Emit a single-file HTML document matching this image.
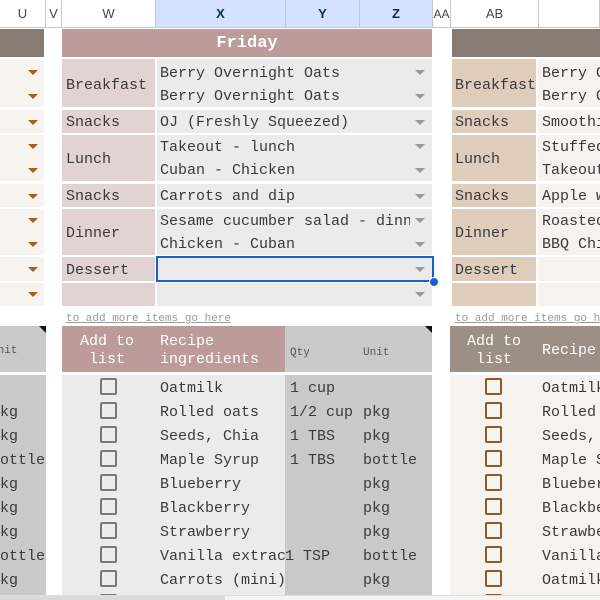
<!DOCTYPE html>
<html><head><meta charset="utf-8">
<style>
*{margin:0;padding:0;box-sizing:border-box}
html,body{width:600px;height:600px;overflow:hidden}
body{background:#fff;font-family:"Liberation Mono",monospace;font-size:15px;color:#3a3a3a}
#w{position:relative;width:600px;height:600px;overflow:hidden}
.a{position:absolute}
.t{position:absolute;white-space:nowrap;overflow:hidden;line-height:22px;margin-top:2px}
.hd{position:absolute;top:0;height:28px;border-right:1px solid #c7c7c7;border-bottom:1px solid #c7c7c7;font-family:"Liberation Sans",sans-serif;font-size:13px;color:#444;text-align:center;line-height:28px}
.sel{background:#d3e3fd;color:#0b2a66;font-weight:bold}
.arr{position:absolute;width:0;height:0;border-left:5px solid transparent;border-right:5px solid transparent;border-top:5px solid #999}
.br{border-top-color:#a0622d}
.cb{position:absolute;width:17px;height:17px;border:2px solid #777;border-radius:2px}
.cbb{border-color:#8b5a2b}
.lnk{position:absolute;font-size:11px;color:#999;text-decoration:underline;white-space:nowrap;margin-top:1px}
</style></head><body><div id="w">
<div class="hd" style="left:0;width:46px;background:#fff">U</div>
<div class="hd" style="left:46px;width:16px">V</div>
<div class="hd" style="left:62px;width:94px">W</div>
<div class="hd sel" style="left:156px;width:130px">X</div>
<div class="hd sel" style="left:286px;width:74px">Y</div>
<div class="hd sel" style="left:360px;width:73px">Z</div>
<div class="hd" style="left:433px;width:18px;font-size:12px">AA</div>
<div class="hd" style="left:451px;width:88px">AB</div>
<div class="hd" style="left:539px;width:61px"></div>

<div class="a" style="left:0;top:29px;width:44px;height:28px;background:#877c74"></div>
<div class="a" style="left:0;top:59px;width:44px;height:48px;background:#f7f3ee"></div>
<div class="a" style="left:0;top:110px;width:44px;height:23px;background:#f7f3ee"></div>
<div class="a" style="left:0;top:135px;width:44px;height:46px;background:#f7f3ee"></div>
<div class="a" style="left:0;top:184px;width:44px;height:23px;background:#f7f3ee"></div>
<div class="a" style="left:0;top:209px;width:44px;height:46px;background:#f7f3ee"></div>
<div class="a" style="left:0;top:257px;width:44px;height:24px;background:#f7f3ee"></div>
<div class="a" style="left:0;top:283px;width:44px;height:23px;background:#f7f3ee"></div>
<div class="arr br" style="left:28px;top:70px"></div>
<div class="arr br" style="left:28px;top:94px"></div>
<div class="arr br" style="left:28px;top:120px"></div>
<div class="arr br" style="left:28px;top:144px"></div>
<div class="arr br" style="left:28px;top:168px"></div>
<div class="arr br" style="left:28px;top:194px"></div>
<div class="arr br" style="left:28px;top:218px"></div>
<div class="arr br" style="left:28px;top:242px"></div>
<div class="arr br" style="left:28px;top:267px"></div>
<div class="arr br" style="left:28px;top:292px"></div>
<div class="a" style="left:0;top:326px;width:46px;height:46px;background:#c9c9c9;overflow:hidden"><div class="t" style="left:-9px;top:12px;font-size:11px;color:#555">Unit</div></div>
<div class="a" style="left:39px;top:326px;width:0;height:0;border-left:7px solid transparent;border-top:7px solid #111"></div>
<div class="a" style="left:0;top:375px;width:46px;height:220px;background:#c9c9c9;overflow:hidden">
<div class="t" style="left:-9px;top:25px">pkg</div>
<div class="t" style="left:-9px;top:49px">pkg</div>
<div class="t" style="left:-9px;top:73px">bottle</div>
<div class="t" style="left:-9px;top:97px">pkg</div>
<div class="t" style="left:-9px;top:121px">pkg</div>
<div class="t" style="left:-9px;top:145px">pkg</div>
<div class="t" style="left:-9px;top:169px">bottle</div>
<div class="t" style="left:-9px;top:193px">pkg</div>
</div>

<div class="a" style="left:62px;top:29px;width:370px;height:28px;background:#bc9b9a;color:#fff;font-weight:bold;font-size:17px;text-align:center;line-height:30px;font-family:'Liberation Mono',monospace">Friday</div>
<div class="a" style="left:62px;top:59px;width:93px;height:48px;background:#e0d3d2"></div>
<div class="a" style="left:62px;top:110px;width:93px;height:23px;background:#e0d3d2"></div>
<div class="a" style="left:62px;top:135px;width:93px;height:46px;background:#e0d3d2"></div>
<div class="a" style="left:62px;top:184px;width:93px;height:23px;background:#e0d3d2"></div>
<div class="a" style="left:62px;top:209px;width:93px;height:46px;background:#e0d3d2"></div>
<div class="a" style="left:62px;top:257px;width:93px;height:24px;background:#e0d3d2"></div>
<div class="a" style="left:62px;top:283px;width:93px;height:23px;background:#e0d3d2"></div>
<div class="a" style="left:157px;top:59px;width:275px;height:48px;background:#ebebeb"></div>
<div class="a" style="left:157px;top:110px;width:275px;height:23px;background:#ebebeb"></div>
<div class="a" style="left:157px;top:135px;width:275px;height:46px;background:#ebebeb"></div>
<div class="a" style="left:157px;top:184px;width:275px;height:23px;background:#ebebeb"></div>
<div class="a" style="left:157px;top:209px;width:275px;height:46px;background:#ebebeb"></div>
<div class="a" style="left:157px;top:257px;width:275px;height:24px;background:#ebebeb"></div>
<div class="a" style="left:157px;top:283px;width:275px;height:23px;background:#ebebeb"></div>
<div class="t" style="left:66px;top:73px">Breakfast</div>
<div class="t" style="left:66px;top:110px">Snacks</div>
<div class="t" style="left:66px;top:147px">Lunch</div>
<div class="t" style="left:66px;top:184px">Snacks</div>
<div class="t" style="left:66px;top:221px">Dinner</div>
<div class="t" style="left:66px;top:258px">Dessert</div>
<div class="t" style="left:160px;top:61px">Berry Overnight Oats</div>
<div class="t" style="left:160px;top:84px">Berry Overnight Oats</div>
<div class="t" style="left:160px;top:110px">OJ (Freshly Squeezed)</div>
<div class="t" style="left:160px;top:135px">Takeout - lunch</div>
<div class="t" style="left:160px;top:158px">Cuban - Chicken</div>
<div class="t" style="left:160px;top:184px">Carrots and dip</div>
<div class="t" style="left:160px;top:209px;width:250px">Sesame cucumber salad - dinner</div>
<div class="t" style="left:160px;top:232px">Chicken - Cuban</div>
<div class="arr" style="left:415px;top:70px"></div>
<div class="arr" style="left:415px;top:94px"></div>
<div class="arr" style="left:415px;top:120px"></div>
<div class="arr" style="left:415px;top:144px"></div>
<div class="arr" style="left:415px;top:168px"></div>
<div class="arr" style="left:415px;top:194px"></div>
<div class="arr" style="left:415px;top:218px"></div>
<div class="arr" style="left:415px;top:242px"></div>
<div class="arr" style="left:415px;top:267px"></div>
<div class="arr" style="left:415px;top:292px"></div>
<div class="a" style="left:156px;top:256px;width:278px;height:26px;border:2px solid #1a5fd1"></div>
<div class="a" style="left:429px;top:277px;width:10px;height:10px;border-radius:50%;background:#1a5fd1;border:1px solid #fff"></div>
<div class="lnk" style="left:66px;top:312px">to add more items go here</div>

<div class="a" style="left:62px;top:326px;width:223px;height:46px;background:#bc9b9a"></div>
<div class="a" style="left:285px;top:326px;width:147px;height:46px;background:#c9c9c9"></div>
<div class="a" style="left:425px;top:326px;width:0;height:0;border-left:7px solid transparent;border-top:7px solid #111"></div>
<div class="t" style="left:80px;top:331px;color:#fff;line-height:18px;text-align:center">Add to<br>list</div>
<div class="t" style="left:160px;top:331px;color:#fff;line-height:18px">Recipe<br>ingredients</div>
<div class="t" style="left:290px;top:340px;font-size:11px;color:#555">Qty</div>
<div class="t" style="left:363px;top:340px;font-size:11px;color:#555">Unit</div>
<div class="a" style="left:62px;top:375px;width:223px;height:220px;background:#ebebeb"></div>
<div class="a" style="left:285px;top:375px;width:147px;height:220px;background:#c9c9c9"></div>
<div class="cb" style="left:100px;top:378px"></div>
<div class="cb" style="left:100px;top:402px"></div>
<div class="cb" style="left:100px;top:426px"></div>
<div class="cb" style="left:100px;top:450px"></div>
<div class="cb" style="left:100px;top:474px"></div>
<div class="cb" style="left:100px;top:498px"></div>
<div class="cb" style="left:100px;top:522px"></div>
<div class="cb" style="left:100px;top:546px"></div>
<div class="cb" style="left:100px;top:570px"></div>
<div class="cb" style="left:100px;top:594px"></div>
<div class="t" style="left:160px;top:376px">Oatmilk</div>
<div class="t" style="left:160px;top:400px">Rolled oats</div>
<div class="t" style="left:160px;top:424px">Seeds, Chia</div>
<div class="t" style="left:160px;top:448px">Maple Syrup</div>
<div class="t" style="left:160px;top:472px">Blueberry</div>
<div class="t" style="left:160px;top:496px">Blackberry</div>
<div class="t" style="left:160px;top:520px">Strawberry</div>
<div class="t" style="left:160px;top:544px;width:126px">Vanilla extract</div>
<div class="t" style="left:160px;top:568px">Carrots (mini)</div>
<div class="t" style="left:290px;top:376px">1 cup</div>
<div class="t" style="left:290px;top:400px">1/2 cup</div>
<div class="t" style="left:290px;top:424px">1 TBS</div>
<div class="t" style="left:290px;top:448px">1 TBS</div>
<div class="t" style="left:285px;top:544px">1 TSP</div>
<div class="t" style="left:363px;top:400px">pkg</div>
<div class="t" style="left:363px;top:424px">pkg</div>
<div class="t" style="left:363px;top:448px">bottle</div>
<div class="t" style="left:363px;top:472px">pkg</div>
<div class="t" style="left:363px;top:496px">pkg</div>
<div class="t" style="left:363px;top:520px">pkg</div>
<div class="t" style="left:363px;top:544px">bottle</div>
<div class="t" style="left:363px;top:568px">pkg</div>

<div class="a" style="left:452px;top:29px;width:148px;height:28px;background:#877c74"></div>
<div class="a" style="left:452px;top:59px;width:84px;height:48px;background:#dfcdbb"></div>
<div class="a" style="left:452px;top:110px;width:84px;height:23px;background:#dfcdbb"></div>
<div class="a" style="left:452px;top:135px;width:84px;height:46px;background:#dfcdbb"></div>
<div class="a" style="left:452px;top:184px;width:84px;height:23px;background:#dfcdbb"></div>
<div class="a" style="left:452px;top:209px;width:84px;height:46px;background:#dfcdbb"></div>
<div class="a" style="left:452px;top:257px;width:84px;height:24px;background:#dfcdbb"></div>
<div class="a" style="left:452px;top:283px;width:84px;height:23px;background:#dfcdbb"></div>
<div class="a" style="left:538px;top:59px;width:62px;height:48px;background:#f6f2ed"></div>
<div class="a" style="left:538px;top:110px;width:62px;height:23px;background:#f6f2ed"></div>
<div class="a" style="left:538px;top:135px;width:62px;height:46px;background:#f6f2ed"></div>
<div class="a" style="left:538px;top:184px;width:62px;height:23px;background:#f6f2ed"></div>
<div class="a" style="left:538px;top:209px;width:62px;height:46px;background:#f6f2ed"></div>
<div class="a" style="left:538px;top:257px;width:62px;height:24px;background:#f6f2ed"></div>
<div class="a" style="left:538px;top:283px;width:62px;height:23px;background:#f6f2ed"></div>
<div class="t" style="left:455px;top:73px;width:81px">Breakfast</div>
<div class="t" style="left:455px;top:110px">Snacks</div>
<div class="t" style="left:455px;top:147px">Lunch</div>
<div class="t" style="left:455px;top:184px">Snacks</div>
<div class="t" style="left:455px;top:221px">Dinner</div>
<div class="t" style="left:455px;top:258px">Dessert</div>
<div class="t" style="left:542px;top:61px;width:58px">Berry Overnight</div>
<div class="t" style="left:542px;top:84px;width:58px">Berry Overnight</div>
<div class="t" style="left:542px;top:110px;width:58px">Smoothie</div>
<div class="t" style="left:542px;top:135px;width:58px">Stuffed</div>
<div class="t" style="left:542px;top:158px;width:58px">Takeout</div>
<div class="t" style="left:542px;top:184px;width:58px">Apple w</div>
<div class="t" style="left:542px;top:209px;width:58px">Roasted</div>
<div class="t" style="left:542px;top:232px;width:58px">BBQ Chicken</div>
<div class="lnk" style="left:455px;top:312px;width:145px;overflow:hidden">to add more items go here</div>
<div class="a" style="left:450px;top:326px;width:150px;height:46px;background:#9c8f86"></div>
<div class="t" style="left:467px;top:331px;color:#fff;line-height:18px;text-align:center">Add to<br>list</div>
<div class="t" style="left:542px;top:340px;color:#fff;line-height:18px;width:58px">Recipe ingredients</div>
<div class="a" style="left:450px;top:375px;width:150px;height:220px;background:#f6f2ed"></div>
<div class="cb cbb" style="left:485px;top:378px"></div>
<div class="cb cbb" style="left:485px;top:402px"></div>
<div class="cb cbb" style="left:485px;top:426px"></div>
<div class="cb cbb" style="left:485px;top:450px"></div>
<div class="cb cbb" style="left:485px;top:474px"></div>
<div class="cb cbb" style="left:485px;top:498px"></div>
<div class="cb cbb" style="left:485px;top:522px"></div>
<div class="cb cbb" style="left:485px;top:546px"></div>
<div class="cb cbb" style="left:485px;top:570px"></div>
<div class="cb cbb" style="left:485px;top:594px"></div>
<div class="t" style="left:542px;top:376px;width:58px">Oatmilk</div>
<div class="t" style="left:542px;top:400px;width:58px">Rolled oats</div>
<div class="t" style="left:542px;top:424px;width:58px">Seeds, Chia</div>
<div class="t" style="left:542px;top:448px;width:58px">Maple Syrup</div>
<div class="t" style="left:542px;top:472px;width:58px">Blueberry</div>
<div class="t" style="left:542px;top:496px;width:58px">Blackberry</div>
<div class="t" style="left:542px;top:520px;width:58px">Strawberry</div>
<div class="t" style="left:542px;top:544px;width:58px">Vanilla</div>
<div class="t" style="left:542px;top:568px;width:58px">Oatmilk</div>

<div class="a" style="left:0;top:595px;width:600px;height:5px;background:#f4f4f4;border-top:1px solid #ddd"></div>
<div class="a" style="left:0;top:596px;width:225px;height:4px;background:#dadada"></div>
</div></body></html>
